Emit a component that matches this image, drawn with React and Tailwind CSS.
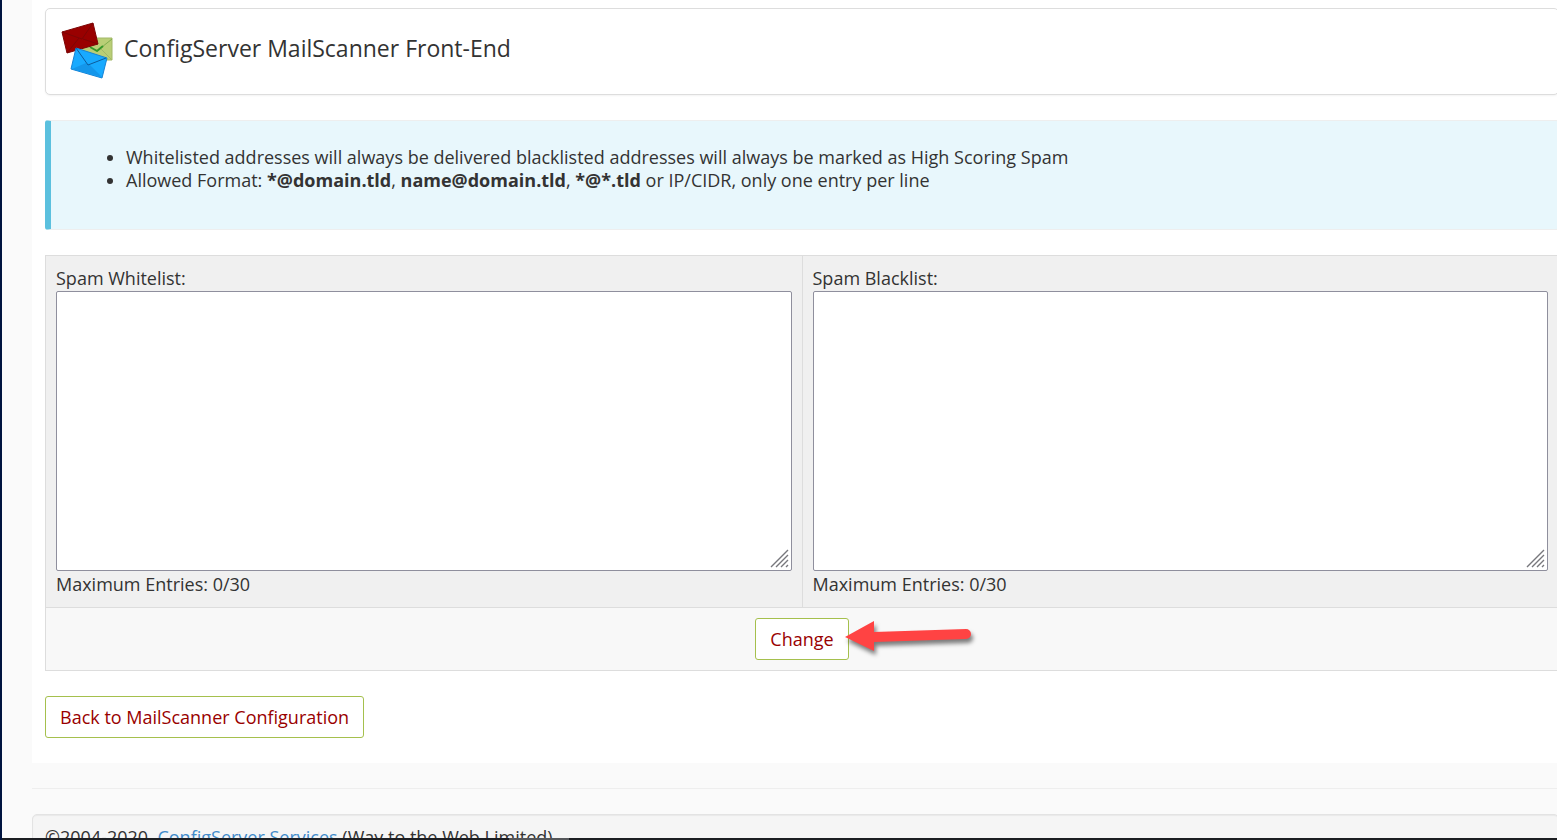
import React from "react";

function MailLogo() {
  return (
    <svg width="54" height="60" viewBox="0 0 54 60" aria-hidden="true" className="shrink-0">
      <g stroke="#a3b868" strokeWidth="1" strokeLinejoin="round">
        <path d="M22 17h30v22H22z" fill="#b9ce76" />
        <path d="M52 39L41 28" fill="none" />
        <path d="M37 30L52 18" fill="none" stroke="#7fae4e" />
        <path d="M30 26l7 4 6-5" fill="none" stroke="#35982a" strokeWidth="2" />
      </g>
      <g stroke="#7d0505" strokeWidth="1" strokeLinejoin="round">
        <path d="M2 11L33 2l5 21-31 9z" fill="#990000" />
        <path d="M2 11l20 7L33 2M7 32l12-15M38 23l-15-5" fill="none" />
      </g>
      <g stroke="#1583d6" strokeWidth="1" strokeLinejoin="round">
        <path d="M16 27l31 10-5 20-31-9z" fill="#18aaff" />
        <path d="M12 48l14-6 4 2 12 12z" fill="#1496ea" stroke="none" />
        <path d="M16 27l12 17 18-7" fill="none" stroke="#0d5c9c" />
      </g>
    </svg>
  );
}

function Arrow() {
  return (
    <svg width="140" height="44" viewBox="0 0 140 44" aria-hidden="true" className="absolute left-full top-0 -ml-1.5 pointer-events-none" style={{ filter: "drop-shadow(2px 4px 2px rgba(0,0,0,0.5))" }}>
      <path d="M2 19L31 3v11l92-3a5 5 0 0 1 0 10l-92 3v9z" fill="#ff4343" />
    </svg>
  );
}

function ListBox({ id, label }) {
  return (
    <td className="w-1/2 border border-[#dddddd] p-[10px] align-top">
      <label htmlFor={id} className="block">{label}</label>
      <div className="relative">
        <textarea id={id} className="block w-full h-[280px] resize-none rounded-xs border border-[#8f8f9d] bg-white p-1 outline-none" />
        <svg width="20" height="20" viewBox="0 0 20 20" aria-hidden="true" className="absolute right-0.5 bottom-0.5 pointer-events-none">
          <path d="M1 18L18 1M6 18L18 6M11 18l7-7M16 18l2-2" stroke="#77777c" strokeWidth="1.4" fill="none" />
        </svg>
      </div>
      <div className="leading-[26px]">Maximum Entries: 0/30</div>
    </td>
  );
}

const buttonClass = "h-[42px] rounded-[3px] border border-[#a5c04d] bg-white px-[14px] text-[#990000]";

export default function App() {
  return (
    <div className="relative h-screen overflow-hidden border-l-2 border-[#00133f] bg-[#fafafa] pl-[30px] font-['Open_Sans',sans-serif] text-[18px] leading-[25px] text-[#333333]">
      <main className="-mr-0.5 bg-white pt-2 pb-[25px] pl-[13px]">
        <header className="flex h-[87px] items-start gap-[10px] rounded-[5px] border border-[#dddddd] bg-white px-[14px] pt-3 shadow-xs">
          <MailLogo />
          <h1 className="pt-[10px] text-[23px] leading-[34px]">ConfigServer MailScanner Front-End</h1>
        </header>

        <section className="mt-[25px] rounded-[3px] border border-l-6 border-[#eeeeee] border-l-[#5bc0de] bg-[#e8f7fc] p-[25px] leading-[23px]">
          <ul className="mb-3 list-disc pl-[50px]">
            <li>Whitelisted addresses will always be delivered blacklisted addresses will always be marked as High Scoring Spam</li>
            <li>
              Allowed Format: <b>*@domain.tld</b>, <b>name@domain.tld</b>, <b>*@*.tld</b> or IP/CIDR, only one entry per line
            </li>
          </ul>
        </section>

        <form onSubmit={(e) => e.preventDefault()}>
          <table className="mt-[25px] w-full table-fixed border-collapse">
            <tbody>
              <tr className="bg-[#f0f0f0]">
                <ListBox id="whitelist" label="Spam Whitelist:" />
                <ListBox id="blacklist" label="Spam Blacklist:" />
              </tr>
              <tr className="bg-[#f8f8f8]">
                <td colSpan={2} className="border border-[#dddddd] p-[10px] text-center">
                  <div className="relative inline-block align-top">
                    <button type="submit" className={buttonClass}>Change</button>
                    <Arrow />
                  </div>
                </td>
              </tr>
            </tbody>
          </table>
        </form>

        <button type="button" className={`${buttonClass} mt-[25px] block`}>Back to MailScanner Configuration</button>
      </main>

      <hr className="my-[25px] border-[#eeeeee]" />

      <footer className="-mr-0.5 rounded-[5px] border border-[#e3e3e3] bg-[#f5f5f5] px-3 py-[10px] inset-shadow-xs">
        ©2004-2020, <a href="#" className="text-[#428bca]">ConfigServer Services</a> (Way to the Web Limited)
      </footer>

      <div className="absolute inset-x-0 bottom-0 h-0.5 bg-[#1c1e22] pl-[507px]">
        <div className="h-full w-[60px] bg-[#55575a]" />
      </div>
    </div>
  );
}
